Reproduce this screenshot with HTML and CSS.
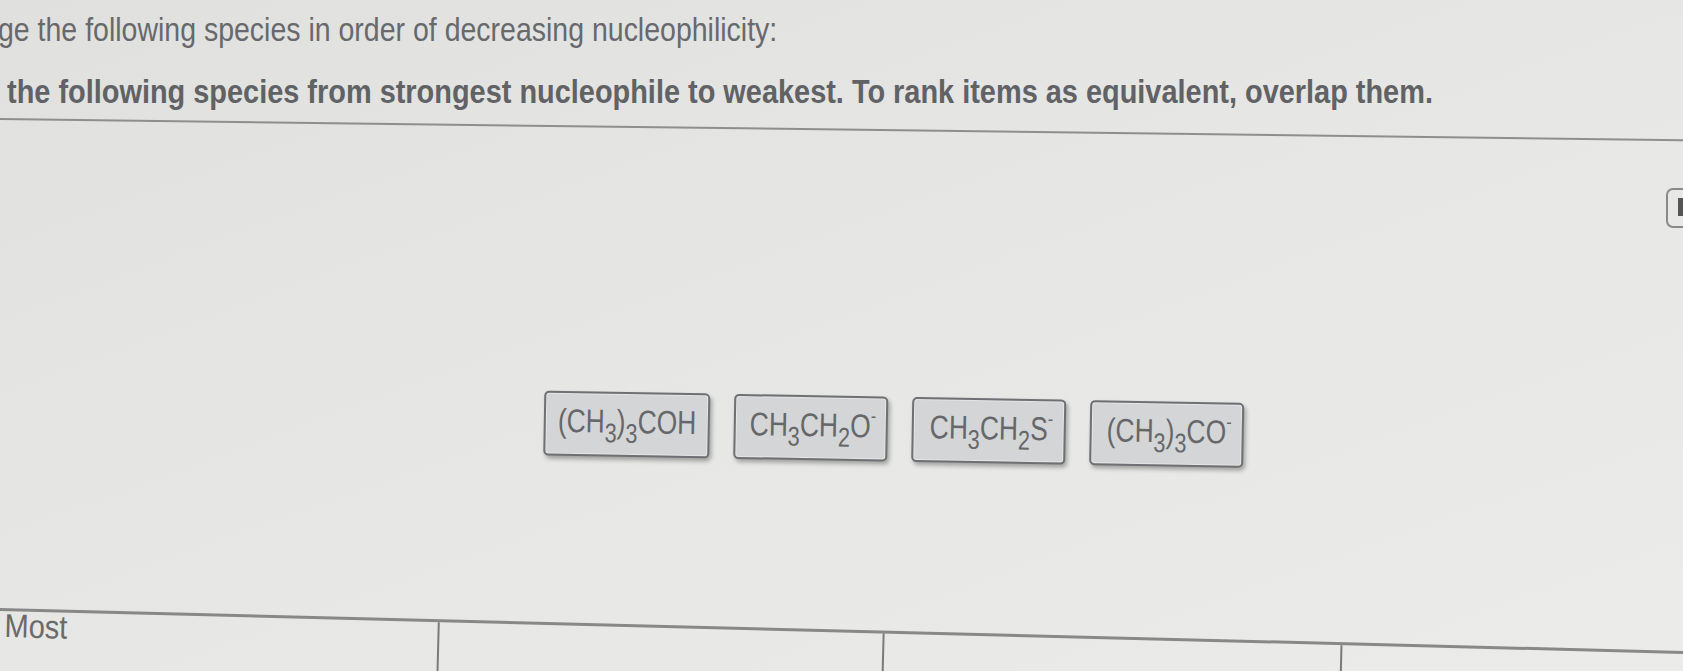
FILE: index.html
```html
<!DOCTYPE html>
<html lang="en">
<head>
  <meta charset="UTF-8">
  <meta name="viewport" content="width=device-width, initial-scale=1.0">
  <title>Nucleophilicity Ranking</title>
  <link rel="stylesheet" href="styles.css">
</head>
<body>
  <header class="prompt">
    <p class="prompt-lead">ge the following species in order of decreasing nucleophilicity:</p>
    <p class="prompt-task">the following species from strongest nucleophile to weakest. To rank items as equivalent, overlap them.</p>
  </header>
  <div class="divider"></div>

  <main class="workspace">
    <div class="tiles">
      <div class="tile"><span class="formula">(CH<sub>3</sub>)<sub>3</sub>COH</span></div>
      <div class="tile"><span class="formula">CH<sub>3</sub>CH<sub>2</sub>O<sup>-</sup></span></div>
      <div class="tile"><span class="formula">CH<sub>3</sub>CH<sub>2</sub>S<sup>-</sup></span></div>
      <div class="tile"><span class="formula">(CH<sub>3</sub>)<sub>3</sub>CO<sup>-</sup></span></div>
    </div>
    <div class="side-button"><span class="side-mark"></span></div>
  </main>

  <section class="ranking">
    <div class="ranking-row">
      <div class="rank-cell"><span class="rank-label">Most</span></div>
      <div class="rank-cell"></div>
      <div class="rank-cell"></div>
      <div class="rank-cell"></div>
    </div>
  </section>
</body>
</html>
```

FILE: styles.css
```css
* {
  margin: 0;
  padding: 0;
  box-sizing: border-box;
}

html,
body {
  overflow: hidden;
}

body {
  font-family: "Liberation Sans", Arial, sans-serif;
  background: linear-gradient(160deg, #e0e0de 0%, #e6e6e4 45%, #ebebe9 100%);
  color: #6b6d70;
  width: 1683px;
  height: 671px;
}

/* narrow face: the regular one squeezed sideways */
.prompt-lead,
.prompt-task,
.formula,
.rank-label {
  transform-origin: 0 50%;
  white-space: nowrap;
}

.prompt {
  padding-top: 9px;
}

.prompt-lead {
  font-size: 34px;
  line-height: 40px;
  margin-left: -2px;
  color: #67696c;
  transform: scaleX(0.838);
}

.prompt-task {
  font-size: 33px;
  line-height: 40px;
  font-weight: 700;
  margin-top: 23px;
  margin-left: 7px;
  color: #606265;
  transform: scaleX(0.876);
}

.divider {
  height: 2px;
  width: 1720px;
  margin-top: 6px;
  background: #8e8e8e;
  transform: rotate(0.72deg);
  transform-origin: 0 0;
}

.workspace {
  position: relative;
  height: 488px;
}

.tiles {
  display: flex;
  gap: 24px;
  padding-left: 549px;
  padding-top: 261px;
  transform: rotate(1deg);
  transform-origin: 0 0;
}

.tile {
  min-width: 154px;
  height: 65px;
  padding: 0 12px;
  display: flex;
  align-items: center;
  justify-content: center;
  background: #d4d5d6;
  border: 2px solid #6f7074;
  border-radius: 5px;
  box-shadow: inset 0 0 0 1px #e6e6e6, 2px 3px 4px rgba(0, 0, 0, 0.3);
  color: #65676a;
}

.formula {
  display: inline-block;
  font-size: 33px;
  line-height: 38px;
  margin-top: -6px;
  transform: scaleX(0.8);
  margin-right: -35px;
}

.tile sub {
  font-size: 0.82em;
  line-height: 0;
  vertical-align: -0.36em;
}

.tile sup {
  font-size: 0.6em;
  line-height: 0;
  vertical-align: 0.75em;
}

.side-button {
  position: absolute;
  left: 1666px;
  top: 68px;
  width: 40px;
  height: 40px;
  border: 2px solid #8a8a8a;
  border-radius: 7px;
}

.side-mark {
  position: absolute;
  left: 10px;
  top: 8px;
  width: 6px;
  height: 18px;
  background: #555;
}

.ranking {
  height: 63px;
  overflow: hidden;
}

.ranking-row {
  display: grid;
  grid-template-columns: 440px 445px 458px 1fr;
  width: 1740px;
  height: 70px;
  border-top: 3px solid #888;
  transform: rotate(1.46deg);
  transform-origin: 0 0;
}

.rank-cell {
  border-right: 2px solid #7a7a7a;
  padding: 0 0 0 5px;
  color: #6a6a6a;
}

.rank-label {
  display: inline-block;
  font-size: 33px;
  line-height: 38px;
  margin-top: -4px;
  transform: scaleX(0.88);
}
```
